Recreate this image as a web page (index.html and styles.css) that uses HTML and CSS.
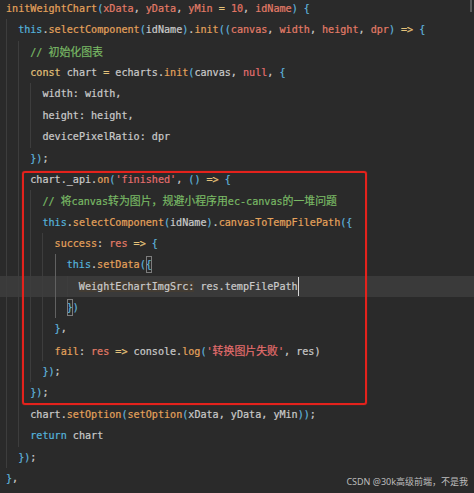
FILE: index.html
```html
<!DOCTYPE html>
<html lang="zh-CN">
<head>
    <meta charset="UTF-8">
    <meta name="viewport" content="width=device-width, initial-scale=1.0">
    <title>initWeightChart</title>
    <link rel="stylesheet" href="styles.css">
</head>
<body>
    <div class="editor">
        <div class="code">
            <div class="ln"><span class="f">initWeightChart</span><span class="b">(</span><span class="p">xData</span>, <span class="p">yData</span>, <span class="p">yMin</span> <span class="o">=</span> <span class="n">10</span>, <span class="p">idName</span><span class="b">)</span> <span class="b">{</span></div>
            <div class="ln"><span class="i"></span><span class="k">this</span>.<span class="f">selectComponent</span><span class="b">(</span>idName<span class="b">)</span>.<span class="f">init</span><span class="b">((</span><span class="p">canvas</span>, <span class="p">width</span>, <span class="p">height</span>, <span class="p">dpr</span><span class="b">)</span> <span class="o">=&gt;</span> <span class="b">{</span></div>
            <div class="ln"><span class="i"></span><span class="i"></span><span class="m">// <span class="cj">初始化图表</span></span></div>
            <div class="ln"><span class="i"></span><span class="i"></span><span class="c">const</span> chart <span class="o">=</span> echarts.<span class="f">init</span><span class="b">(</span>canvas, <span class="s">null</span>, <span class="b">{</span></div>
            <div class="ln"><span class="i"></span><span class="i"></span><span class="i"></span>width: width,</div>
            <div class="ln"><span class="i"></span><span class="i"></span><span class="i"></span>height: height,</div>
            <div class="ln"><span class="i"></span><span class="i"></span><span class="i"></span>devicePixelRatio: dpr</div>
            <div class="ln"><span class="i"></span><span class="i"></span><span class="b">})</span>;</div>
            <div class="ln"><span class="i"></span><span class="i"></span>chart._api.<span class="f">on</span><span class="b">(</span><span class="s">'finished'</span>, <span class="b">()</span> <span class="o">=&gt;</span> <span class="b">{</span></div>
            <div class="ln"><span class="i"></span><span class="i"></span><span class="i"></span><span class="m">// <span class="cj">将</span>canvas<span class="cj">转为图片，规避小程序用</span>ec-canvas<span class="cj">的一堆问题</span></span></div>
            <div class="ln"><span class="i"></span><span class="i"></span><span class="i"></span><span class="k">this</span>.<span class="f">selectComponent</span><span class="b">(</span>idName<span class="b">)</span>.<span class="f">canvasToTempFilePath</span><span class="b">({</span></div>
            <div class="ln"><span class="i"></span><span class="i"></span><span class="i"></span><span class="i"></span><span class="f">success</span>: <span class="p">res</span> <span class="o">=&gt;</span> <span class="b">{</span></div>
            <div class="ln"><span class="i"></span><span class="i"></span><span class="i"></span><span class="i"></span><span class="i on"></span><span class="k">this</span>.<span class="f">setData</span><span class="b">(</span><span class="b match">{</span></div>
            <div class="ln cur-line"><span class="i"></span><span class="i"></span><span class="i"></span><span class="i"></span><span class="i on"></span><span class="i"></span><span class="word">WeightEchartImgSrc:</span> res.tempFilePath<span class="cur"></span></div>
            <div class="ln"><span class="i"></span><span class="i"></span><span class="i"></span><span class="i"></span><span class="i on"></span><span class="b match">}</span><span class="b">)</span></div>
            <div class="ln"><span class="i"></span><span class="i"></span><span class="i"></span><span class="i"></span><span class="b">}</span>,</div>
            <div class="ln"><span class="i"></span><span class="i"></span><span class="i"></span><span class="i"></span><span class="f">fail</span>: <span class="p">res</span> <span class="o">=&gt;</span> console.<span class="f">log</span><span class="b">(</span><span class="s">'<span class="cj">转换图片失败</span>'</span>, res)</div>
            <div class="ln"><span class="i"></span><span class="i"></span><span class="i"></span><span class="b">})</span>;</div>
            <div class="ln"><span class="i"></span><span class="i"></span><span class="b">})</span>;</div>
            <div class="ln"><span class="i"></span><span class="i"></span>chart.<span class="f">setOption</span><span class="b">(</span><span class="f">setOption</span><span class="b">(</span>xData, yData, yMin<span class="b">))</span>;</div>
            <div class="ln"><span class="i"></span><span class="i"></span><span class="k">return</span> chart</div>
            <div class="ln"><span class="i"></span><span class="b">})</span>;</div>
            <div class="ln"><span class="b">}</span>,</div>
        </div>

        <div class="mark"></div>
        <div class="scroll-thumb"></div>
        <div class="watermark">CSDN @30k高级前端，不是我</div>
    </div>
</body>
</html>
```

FILE: styles.css
```css
body {
    margin: 0;
    background-color: #2a2a2a;
    overflow: hidden;
}
.editor {
    position: relative;
    width: 474px;
    height: 493px;
    overflow: hidden;
    font-family: "DejaVu Sans Mono", "Noto Sans CJK SC", monospace;
    font-size: 10.1px;
    line-height: 21.36px;
    color: #cbcbcb;
    -webkit-text-stroke: 0.2px currentColor;
}
.code {
    margin-top: -2px;
}
.ln {
    height: 21.36px;
    padding-left: 6px;
    white-space: pre;
}
.i {
    display: inline-block;
    box-sizing: border-box;
    width: 2ch;
    height: 21.36px;
    vertical-align: top;
    border-left: 1px solid #3d3d3d;
}
.i.on {
    border-left-color: #616161;
}
.cj {
    font-family: "Noto Sans CJK SC", sans-serif;
    font-size: 10.9px;
}

/* token colours */
.f { color: #e5a35c; }
.p { color: #e47c68; }
.n { color: #e27464; }
.k { color: #55b3dc; }
.c { color: #e4c27a; }
.b { color: #5fb3dc; }
.o { color: #e4c27a; }
.s { color: #e56e6e; }
.m { color: #79b965; }

.cur-line {
    background-color: #3a3a3a;
}
.word {
    background-color: #433c33;
}
.match {
    outline: 1px solid #7d7d7d;
    outline-offset: -1px;
    padding: 3px 0;
}
.cur {
    display: inline-block;
    width: 0;
    height: 19px;
    vertical-align: middle;
    border-left: 1.5px solid #d6d6d6;
}

.mark {
    position: absolute;
    left: 22px;
    top: 171px;
    width: 341px;
    height: 230px;
    border: 2px solid #e4221c;
    border-radius: 3px;
    box-shadow: 0 0 1px #e4221c;
}
.scroll-thumb {
    position: absolute;
    right: 2px;
    top: 0;
    width: 2px;
    height: 12px;
    background-color: #5c5c5c;
}
.watermark {
    position: absolute;
    right: 6px;
    bottom: 4px;
    font-family: "Noto Sans", "Noto Sans CJK SC", sans-serif;
    font-size: 9px;
    line-height: 14px;
    color: #bdbdbd;
    -webkit-text-stroke: 0;
}
```
